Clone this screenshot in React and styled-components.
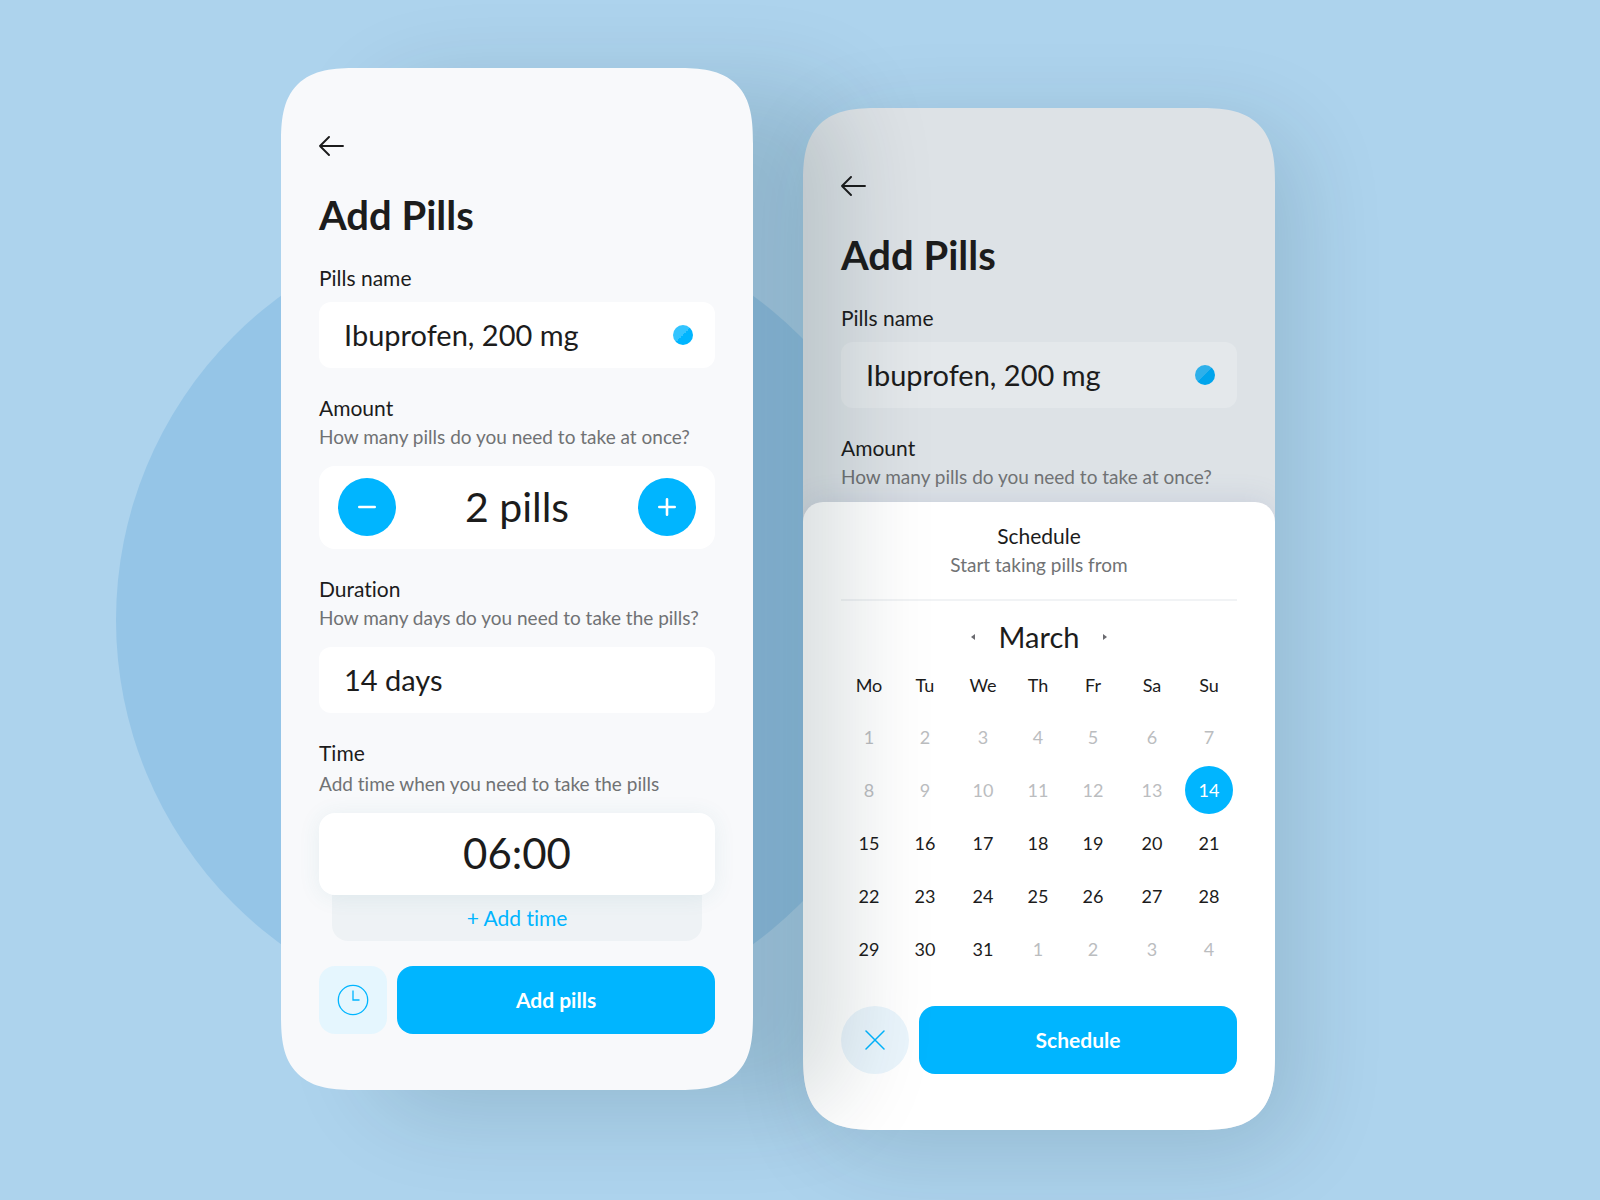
import React, { useId, useState } from 'react';
import styled, { createGlobalStyle } from 'styled-components';

const GlobalStyle = createGlobalStyle`
    * {
        box-sizing: border-box;
    }
    body {
        margin: 0;
        background: #add3ed;
        color: #1c1c1c;
        font-family: Lato, "Open Sans", sans-serif;
        font-size: 19px;
        font-variant-ligatures: none;
    }
    button, input {
        font: inherit;
        font-variant-ligatures: none;
        color: inherit;
        border: 0;
        padding: 0;
    }
    button {
        cursor: pointer;
    }
    svg {
        display: block;
    }
`

const Stage = styled.main`
    min-height: 100vh;
    padding: 68px 44px 68px 0;
    display: flex;
    flex-wrap: wrap;
    justify-content: center;
    align-items: flex-start;
    gap: 50px;
    overflow: hidden;
`

const Slot = styled.div`
    flex: 0 1 472px;
    min-width: 0;
    position: relative;
    z-index: ${props => props.$front ? 2 : 1};
    margin-top: ${props => props.$front ? '0' : '40px'};
`

// big disc behind the phones
const Disc = styled.div`
    position: absolute;
    z-index: 0;
    width: 802px;
    height: 802px;
    left: calc(50% - 283px - 401px);
    top: 219px;
    border-radius: 50%;
    background: #95c5e7;
`

const Phone = styled.section`
    overflow: hidden;
    border-radius: 64px;
    background: ${props => props.$dimmed ? '#dde2e6' : '#f8f9fb'};
    box-shadow: ${props => props.$dimmed ? '20px' : '94px'} 20px 90px rgba(0, 40, 50, 0.15);

    @supports (corner-shape: squircle) {
        border-radius: 76px;
        corner-shape: superellipse(1.5);
    }
`

const Screen = styled.form`
    padding: 68px 38px ${props => props.$short ? '13px' : '56px'};
    display: flex;
    flex-direction: column;
`

const BackButton = styled.button`
    align-self: flex-start;
    background: none;
`

const Title = styled.h1`
    margin: 37px 0 28px;
    font-size: 40px;
    line-height: 45px;
    font-weight: 700;
`

const Group = styled.div`
    display: flex;
    flex-direction: column;
    margin-bottom: ${props => props.$last ? '0' : '28px'};
`

const Label = styled.label`
    font-size: 21px;
    line-height: 24px;
`

const Hint = styled.p`
    margin: ${props => props.$loose ? '7px' : '5px'} 0 0;
    line-height: 24px;
    color: #707274;
`

const Field = styled.div`
    display: flex;
    align-items: center;
    height: 66px;
    margin-top: ${props => props.$hinted ? '17px' : '12px'};
    padding: 0 22px 0 25px;
    border-radius: 12px;
    background: ${props => props.$dimmed ? '#e4e8eb' : '#fff'};
`

const TextInput = styled.input`
    flex: 1;
    min-width: 0;
    height: 100%;
    padding-bottom: 2px;
    background: none;
    font-size: 29px;
    outline: none;
`

const PillDot = styled.span`
    width: 20px;
    height: 20px;
    border-radius: 50%;
    background: ${props => props.$dimmed
        ? 'linear-gradient(135deg, #2eb0ea 50%, #00a4ec 50%)'
        : 'linear-gradient(135deg, #33c4ff 50%, #00b5ff 50%)'};
`

const Stepper = styled.div`
    display: flex;
    align-items: center;
    justify-content: space-between;
    height: 83px;
    margin-top: 17px;
    padding: 0 19px 2px;
    border-radius: 16px;
    background: #fff;
    font-size: 41px;
`

const RoundButton = styled.button`
    display: grid;
    place-items: center;
    width: 58px;
    height: 58px;
    border-radius: 50%;
    background: #00b5ff;
    color: #fff;
`

const TimeInput = styled.input`
    position: relative;
    width: 100%;
    height: 82px;
    margin-top: 17px;
    padding-bottom: 2px;
    border-radius: 16px;
    background: #fff;
    box-shadow: 0 2px 22px rgba(60, 130, 140, 0.09);
    font-size: 42px;
    text-align: center;
    outline: none;
`

const AddTime = styled.button`
    height: 46px;
    margin: 0 13px;
    padding-bottom: 2px;
    border-radius: 0 0 16px 16px;
    background: #eef2f5;
    color: #00b5ff;
    font-size: 21px;
`

const Actions = styled.div`
    display: flex;
    gap: 10px;
    margin-top: ${props => props.$gap};
`

const IconButton = styled.button`
    flex: none;
    display: grid;
    place-items: center;
    width: 68px;
    height: 68px;
    border-radius: ${props => props.$round ? '50%' : '16px'};
    background: ${props => props.$round ? '#eaf5fc' : '#e5f6fe'};
    color: #00b5ff;
`

const MainButton = styled.button`
    flex: 1;
    height: 68px;
    padding-bottom: 2px;
    border-radius: 16px;
    background: #00b5ff;
    color: #fff;
    font-size: 21px;
    font-weight: 700;
`

const Sheet = styled.div`
    padding: 22px 38px 56px;
    border-radius: 20px 20px 0 0;
    background: #fff;
    box-shadow: 0 0 30px rgba(90, 100, 160, 0.16);
`

const SheetHeader = styled.header`
    padding-bottom: 22px;
    border-bottom: 2px solid #f1f3f5;
    text-align: center;
`

const SheetTitle = styled.h2`
    margin: 0;
    font-size: 21px;
    line-height: 24px;
    font-weight: 400;
`

const MonthBar = styled.div`
    display: flex;
    align-items: center;
    justify-content: center;
    gap: 18px;
    margin: 19px 0 6px;
    font-size: 29px;
    line-height: 34px;
`

const MonthButton = styled.button`
    display: grid;
    place-items: center;
    width: 16px;
    height: 24px;
    background: none;
    color: #6b6b70;
`

const Calendar = styled.table`
    width: 100%;
    table-layout: fixed;
    border-collapse: collapse;
    font-size: 18px;

    th, td {
        height: 53px;
        padding: 0;
        text-align: center;
        font-weight: 400;
    }
    th {
        height: 50px;
    }
`

const Day = styled.button`
    width: 48px;
    height: 48px;
    border-radius: 50%;
    background: ${props => props.$picked ? '#00b5ff' : 'none'};
    color: ${props => props.$picked ? '#fff' : props.$muted ? '#bbbdbf' : '#1c1c1c'};
`

const weekdays = ['Mo', 'Tu', 'We', 'Th', 'Fr', 'Sa', 'Su'];
const colWidths = [56, 56, 60, 50, 60, 58, 56];
const weeks = [
    [1, 2, 3, 4, 5, 6, 7],
    [8, 9, 10, 11, 12, 13, 14],
    [15, 16, 17, 18, 19, 20, 21],
    [22, 23, 24, 25, 26, 27, 28],
    [29, 30, 31, 1, 2, 3, 4],
];
const today = 14;

function PillsHead({ dimmed }) {
    const id = useId();
    return (
        <>
            <BackButton type="button" aria-label="Back">
                <svg width="25" height="20" viewBox="0 0 25 20" fill="none" stroke="currentColor" strokeWidth="1.9" strokeLinecap="round" strokeLinejoin="round">
                    <path d="M10 1 1 10l9 9M1 10h23" />
                </svg>
            </BackButton>
            <Title>Add Pills</Title>
            <Group>
                <Label htmlFor={id}>Pills name</Label>
                <Field $dimmed={dimmed}>
                    <TextInput id={id} defaultValue="Ibuprofen, 200 mg" />
                    <PillDot $dimmed={dimmed} />
                </Field>
            </Group>
        </>
    )
}

function AddPills() {
    const [amount, setAmount] = useState(2);
    return (
        <Phone>
            <Screen onSubmit={e => e.preventDefault()}>
                <PillsHead />
                <Group>
                    <Label htmlFor="amount">Amount</Label>
                    <Hint>How many pills do you need to take at once?</Hint>
                    <Stepper>
                        <RoundButton type="button" aria-label="Less" onClick={() => setAmount(Math.max(1, amount - 1))}>
                            <svg width="18" height="18" viewBox="0 0 18 18" stroke="currentColor" strokeWidth="2.6" strokeLinecap="round">
                                <path d="M1.3 9h15.4" />
                            </svg>
                        </RoundButton>
                        <output id="amount">{amount} pills</output>
                        <RoundButton type="button" aria-label="More" onClick={() => setAmount(amount + 1)}>
                            <svg width="18" height="18" viewBox="0 0 18 18" stroke="currentColor" strokeWidth="2.6" strokeLinecap="round">
                                <path d="M1.3 9h15.4M9 1.3v15.4" />
                            </svg>
                        </RoundButton>
                    </Stepper>
                </Group>
                <Group>
                    <Label htmlFor="duration">Duration</Label>
                    <Hint>How many days do you need to take the pills?</Hint>
                    <Field $hinted>
                        <TextInput id="duration" defaultValue="14 days" />
                    </Field>
                </Group>
                <Group $last>
                    <Label htmlFor="time">Time</Label>
                    <Hint $loose>Add time when you need to take the pills</Hint>
                    <TimeInput id="time" defaultValue="06:00" />
                    <AddTime type="button">+ Add time</AddTime>
                </Group>
                <Actions $gap="25px">
                    <IconButton type="button" aria-label="Reminder">
                        <svg width="32" height="32" viewBox="0 0 32 32" fill="none" stroke="currentColor" strokeWidth="1.3">
                            <circle cx="16" cy="16" r="14.7" />
                            <path d="M16 6.5V16h6.5" />
                        </svg>
                    </IconButton>
                    <MainButton type="submit">Add pills</MainButton>
                </Actions>
            </Screen>
        </Phone>
    )
}

function Schedule() {
    const [picked, setPicked] = useState(today);
    return (
        <Phone $dimmed>
            <Screen as="div" $short>
                <PillsHead dimmed />
                <Group $last>
                    <Label as="span">Amount</Label>
                    <Hint>How many pills do you need to take at once?</Hint>
                </Group>
            </Screen>
            <Sheet>
                <SheetHeader>
                    <SheetTitle>Schedule</SheetTitle>
                    <Hint>Start taking pills from</Hint>
                </SheetHeader>
                <MonthBar>
                    <MonthButton type="button" aria-label="Previous month">
                        <svg width="4" height="6" viewBox="0 0 4 6" fill="currentColor"><path d="M4 0v6L0 3z" /></svg>
                    </MonthButton>
                    March
                    <MonthButton type="button" aria-label="Next month">
                        <svg width="4" height="6" viewBox="0 0 4 6" fill="currentColor"><path d="M0 0v6l4-3z" /></svg>
                    </MonthButton>
                </MonthBar>
                <Calendar>
                    <colgroup>
                        {colWidths.map((w, i) => <col key={i} width={w} />)}
                    </colgroup>
                    <thead>
                        <tr>{weekdays.map(d => <th key={d} scope="col">{d}</th>)}</tr>
                    </thead>
                    <tbody>
                        {weeks.map((week, row) => (
                            <tr key={row}>
                                {week.map((d, i) => {
                                    const next = row === 4 && d < 7;
                                    return (
                                        <td key={i}>
                                            <Day
                                                type="button"
                                                $picked={!next && d === picked}
                                                $muted={next || d < today}
                                                onClick={() => !next && setPicked(d)}
                                            >
                                                {d}
                                            </Day>
                                        </td>
                                    )
                                })}
                            </tr>
                        ))}
                    </tbody>
                </Calendar>
                <Actions $gap="31px">
                    <IconButton type="button" aria-label="Close" $round>
                        <svg width="20" height="20" viewBox="0 0 20 20" stroke="currentColor" strokeWidth="1.5" strokeLinecap="round">
                            <path d="M1 1l18 18M19 1 1 19" />
                        </svg>
                    </IconButton>
                    <MainButton type="button">Schedule</MainButton>
                </Actions>
            </Sheet>
        </Phone>
    )
}

export default function App() {
    return (
        <>
            <GlobalStyle />
            <Stage>
                <Disc />
                <Slot $front><AddPills /></Slot>
                <Slot><Schedule /></Slot>
            </Stage>
        </>
    )
}
